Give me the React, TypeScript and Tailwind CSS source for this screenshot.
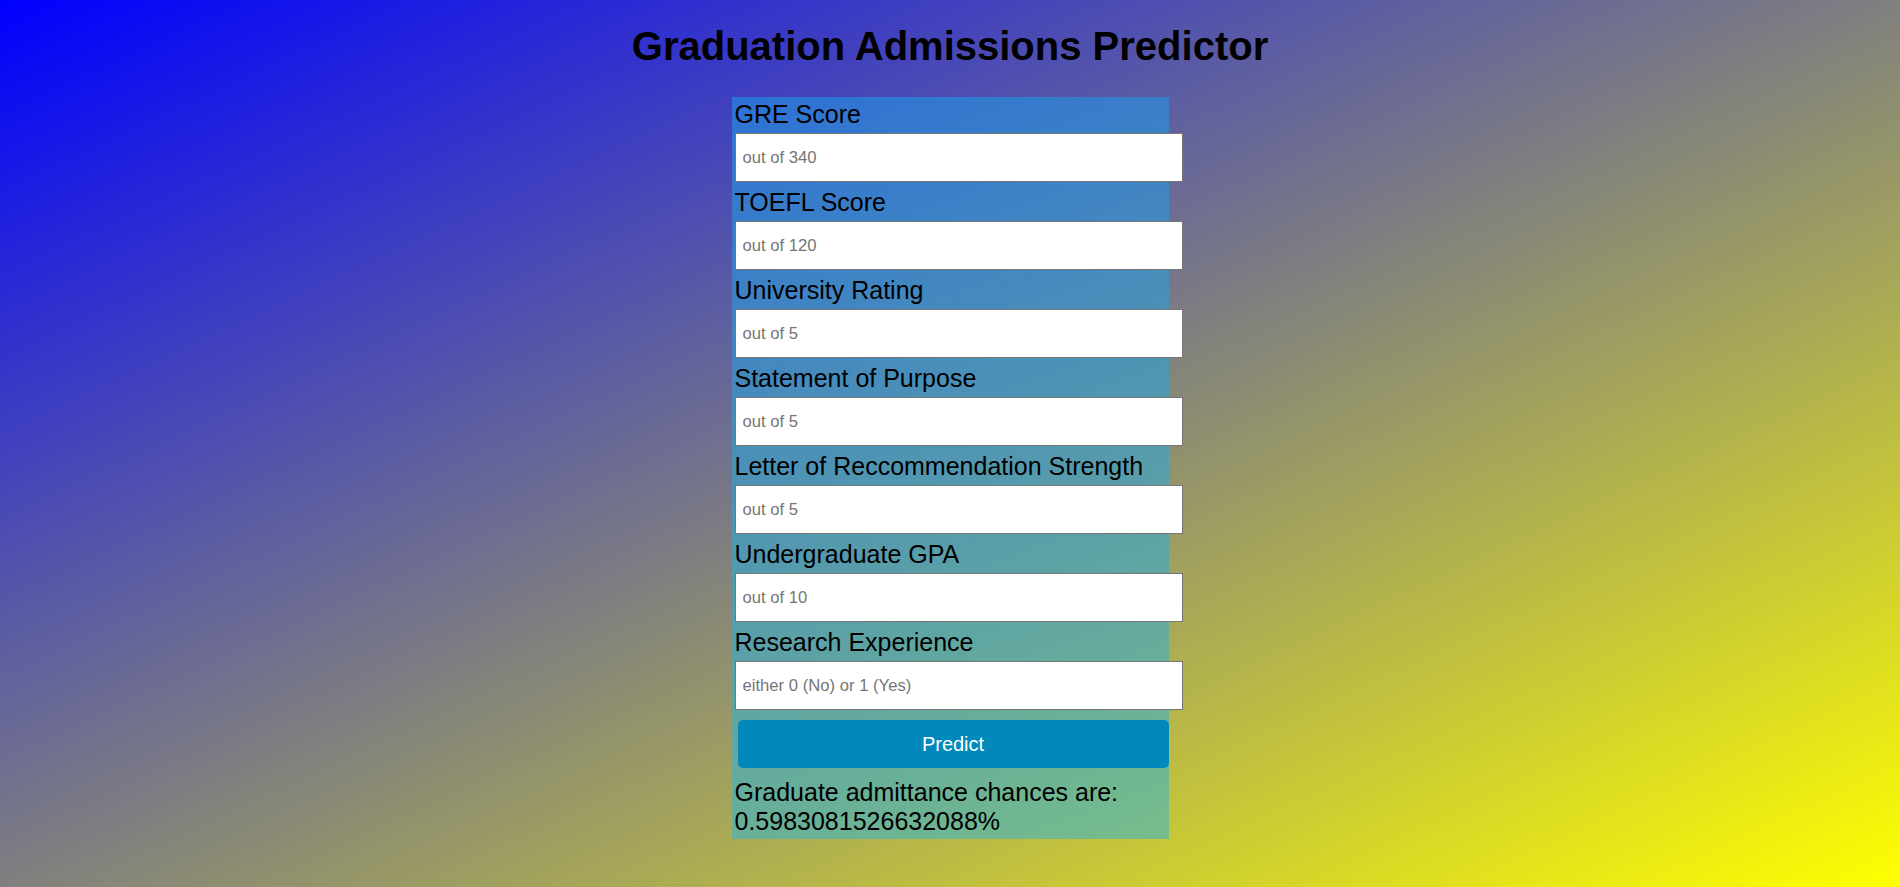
import React from "react";

const fields = [
  { label: "GRE Score", placeholder: "out of 340" },
  { label: "TOEFL Score", placeholder: "out of 120" },
  { label: "University Rating", placeholder: "out of 5" },
  { label: "Statement of Purpose", placeholder: "out of 5" },
  { label: "Letter of Reccommendation Strength", placeholder: "out of 5" },
  { label: "Undergraduate GPA", placeholder: "out of 10" },
  { label: "Research Experience", placeholder: "either 0 (No) or 1 (Yes)" },
];

export default function App() {
  return (
    <div className="min-h-screen w-full overflow-hidden bg-[linear-gradient(to_bottom_right,#0000ff,#ffff00)] pt-[23px] font-['Liberation_Sans',Arial,sans-serif] text-black">
      <h1 className="text-center text-[40px] font-bold leading-[46px]">Graduation Admissions Predictor</h1>

      {/* Form card */}
      <form
        onSubmit={(e) => e.preventDefault()}
        className="mx-auto mt-[28px] flex w-[437px] flex-col bg-[linear-gradient(160deg,#2d71d6,#76bd8b)] pb-[3px] pl-[3px] pt-[3px]"
      >
        <div className="flex flex-col gap-[6px]">
          {fields.map((f) => (
            <div key={f.label} className="flex flex-col">
              <label className="text-[25px] leading-[28px]">{f.label}</label>
              <input
                type="text"
                placeholder={f.placeholder}
                className="mt-[5px] h-[49px] w-[448px] border border-[#767676] bg-white pl-[7px] text-[16.67px] text-black outline-none placeholder:text-[#757575]"
              />
            </div>
          ))}
        </div>

        <button
          type="submit"
          className="ml-[3px] mt-[10px] h-[48px] w-[431px] rounded-[5px] bg-[#0089ba] text-[20px] text-white"
        >
          Predict
        </button>

        <p className="mt-[10px] text-[25px] leading-[29px]">
          Graduate admittance chances are: 0.5983081526632088%
        </p>
      </form>
    </div>
  );
}
